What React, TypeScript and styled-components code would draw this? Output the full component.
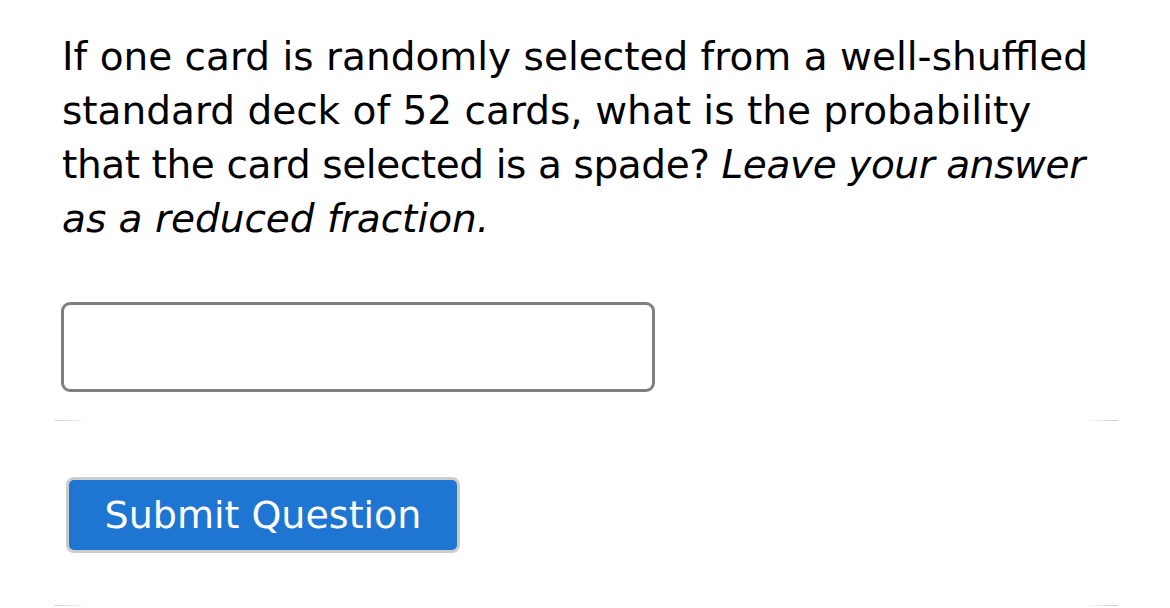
import React from 'react';
import styled, {createGlobalStyle} from 'styled-components';

const GlobalStyle = createGlobalStyle`
  body {
    margin: 0;
    background: #ffffff;
    font-family: "DejaVu Sans", "Liberation Sans", sans-serif;
    color: #000000;
  }
`;

const Page = styled.div`
  padding: 30px 52px 0 55px;
`;

const Question = styled.p`
  margin: 0 0 0 7px;
  font-size: 39px;
  line-height: 54px;
  white-space: nowrap;
  em {
    font-style: italic;
  }
`;

const Tight = styled.span`
  letter-spacing: -0.4px;
`;

const AnswerInput = styled.input`
  display: block;
  box-sizing: border-box;
  width: 594px;
  height: 90px;
  margin: 56px 0 0 6px;
  border: 3px solid #7f7f7f;
  border-radius: 9px;
  font-size: 32px;
  padding: 0 16px;
  &:focus {
    outline: none;
  }
`;

const Rule = styled.hr`
  height: 1px;
  border: none;
  margin: ${(props: {top: number}) => props.top}px 0 0;
  background: linear-gradient(
    to right,
    #c8c8c8 0px,
    #ffffff 32px,
    #ffffff calc(100% - 32px),
    #c8c8c8 100%
  );
`;

const SubmitButton = styled.button`
  display: block;
  box-sizing: border-box;
  width: 394px;
  height: 76px;
  margin: 56px 0 0 11px;
  background: #1f76d2;
  color: #ffffff;
  border: 3px solid #cccccc;
  border-radius: 8px;
  font-family: "DejaVu Sans", "Liberation Sans", sans-serif;
  font-size: 38px;
  cursor: pointer;
`;

export default function App() {
  return (
    <Page>
      <GlobalStyle />
      <Question>
        If one card is randomly selected from a well-shuffled
        <br />
        standard deck of 52 cards, what is the probability
        <br />
        <Tight>
          that the card selected is a spade? <em>Leave your answer</em>
        </Tight>
        <br />
        <em>as a reduced fraction.</em>
      </Question>
      <AnswerInput type="text" aria-label="answer" />
      <Rule top={28} />
      <SubmitButton type="button">Submit Question</SubmitButton>
      <Rule top={52} />
    </Page>
  );
}
